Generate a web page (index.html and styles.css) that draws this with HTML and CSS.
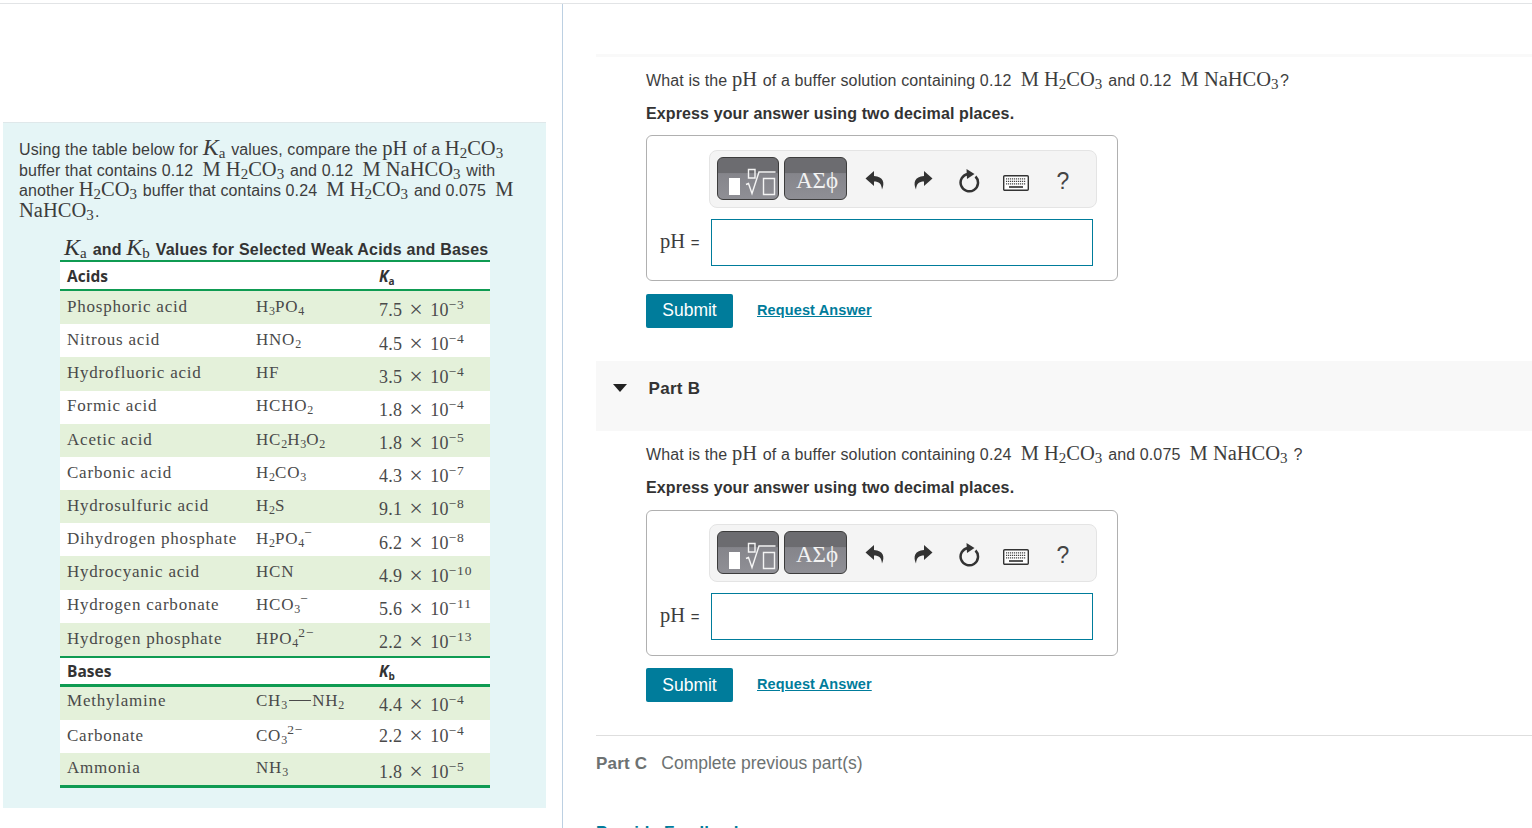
FILE: index.html
```html
<!DOCTYPE html>
<html lang="en">
<head>
<meta charset="utf-8">
<title>Buffer pH</title>
<link rel="stylesheet" href="styles.css">
</head>
<body>
<svg class="defs" width="0" height="0" aria-hidden="true">
  <symbol id="i-undo" viewBox="0 0 24 24"><path d="M11 2 L2.500 9.500 L11 17 V12.500 C16 12.500 18.500 14.500 19 20.500 C22 14 20.500 7.500 11 7 Z"/></symbol>
  <symbol id="i-redo" viewBox="0 0 24 24"><path d="M14 2 L22.500 9.500 L14 17 V12.500 C9 12.500 6.500 14.500 6 20.500 C3 14 4.500 7.500 14 7 Z"/></symbol>
  <symbol id="i-reset" viewBox="0 0 24 24"><path d="M11 5 A8.700 8.700 0 1 0 18.500 7.500" fill="none" stroke="#333" stroke-width="2.500"/><path d="M9.500 0 L17.500 5 L10 10 Z"/></symbol>
  <symbol id="i-keys" viewBox="0 0 26 16"><rect x="0.700" y="0.700" width="24.600" height="14.600" rx="1" fill="#fff" stroke="#333" stroke-width="1.400"/><path d="M3 3.800H23M3 6.300H23M3 8.800H23" stroke="#444" stroke-width="1.300" stroke-dasharray="1.200 .8"/><path d="M6 12H20" stroke="#444" stroke-width="1.800"/></symbol>
  <symbol id="i-template" viewBox="0 0 62 43"><rect x="12" y="21" width="11" height="17" fill="#fff"/><path d="M31.500 12.500h6.500v8.500h-6.500z M46.500 21.500h11v16h-11z M29 27.500l2.500-1 3.500 10 7-21.500h16.500" fill="none" stroke="#f4f4f4" stroke-width="1.400"/></symbol>
</svg>
<div class="page">
  <aside class="left">
    <div class="intro">
      <p class="lead">Using the table below for <span class="m"><i>K</i><sub>a</sub></span> values, compare the <span class="m">pH</span> of a <span class="m">H<sub>2</sub>CO<sub>3</sub></span> buffer that contains 0.12 &nbsp;<span class="m">M H<sub>2</sub>CO<sub>3</sub></span> and 0.12 &nbsp;<span class="m">M NaHCO<sub>3</sub></span> with another <span class="m">H<sub>2</sub>CO<sub>3</sub></span> buffer that contains 0.24 &nbsp;<span class="m">M H<sub>2</sub>CO<sub>3</sub></span> and 0.075 &nbsp;<span class="m">M NaHCO<sub>3</sub></span>.</p>
      <div class="ktable">
        <div class="ktitle"><span class="m"><i>K</i><sub>a</sub></span> and <span class="m"><i>K</i><sub>b</sub></span> Values for Selected Weak Acids and Bases</div>
        <div class="row head h-acids"><span>Acids</span><span></span><span><i>K</i><sub>a</sub></span></div>
        <div class="row alt"><span>Phosphoric acid</span><span>H<sub>3</sub>PO<sub>4</sub></span><span class="val">7.5 <span class="x">×</span> 10<sup>−3</sup></span></div>
        <div class="row"><span>Nitrous acid</span><span>HNO<sub>2</sub></span><span class="val">4.5 <span class="x">×</span> 10<sup>−4</sup></span></div>
        <div class="row alt"><span>Hydrofluoric acid</span><span>HF</span><span class="val">3.5 <span class="x">×</span> 10<sup>−4</sup></span></div>
        <div class="row"><span>Formic acid</span><span>HCHO<sub>2</sub></span><span class="val">1.8 <span class="x">×</span> 10<sup>−4</sup></span></div>
        <div class="row alt"><span>Acetic acid</span><span>HC<sub>2</sub>H<sub>3</sub>O<sub>2</sub></span><span class="val">1.8 <span class="x">×</span> 10<sup>−5</sup></span></div>
        <div class="row"><span>Carbonic acid</span><span>H<sub>2</sub>CO<sub>3</sub></span><span class="val">4.3 <span class="x">×</span> 10<sup>−7</sup></span></div>
        <div class="row alt"><span>Hydrosulfuric acid</span><span>H<sub>2</sub>S</span><span class="val">9.1 <span class="x">×</span> 10<sup>−8</sup></span></div>
        <div class="row"><span>Dihydrogen phosphate</span><span>H<sub>2</sub>PO<sub>4</sub><sup>−</sup></span><span class="val">6.2 <span class="x">×</span> 10<sup>−8</sup></span></div>
        <div class="row alt"><span>Hydrocyanic acid</span><span>HCN</span><span class="val">4.9 <span class="x">×</span> 10<sup>−10</sup></span></div>
        <div class="row"><span>Hydrogen carbonate</span><span>HCO<sub>3</sub><sup>−</sup></span><span class="val">5.6 <span class="x">×</span> 10<sup>−11</sup></span></div>
        <div class="row alt"><span>Hydrogen phosphate</span><span>HPO<sub>4</sub><sup>2−</sup></span><span class="val">2.2 <span class="x">×</span> 10<sup>−13</sup></span></div>
        <div class="row head h-bases"><span>Bases</span><span></span><span><i>K</i><sub>b</sub></span></div>
        <div class="row alt tight"><span>Methylamine</span><span>CH<sub>3</sub><span class="bond"></span>NH<sub>2</sub></span><span class="val">4.4 <span class="x">×</span> 10<sup>−4</sup></span></div>
        <div class="row"><span>Carbonate</span><span>CO<sub>3</sub><sup>2−</sup></span><span class="val up">2.2 <span class="x">×</span> 10<sup>−4</sup></span></div>
        <div class="row alt last"><span>Ammonia</span><span>NH<sub>3</sub></span><span class="val">1.8 <span class="x">×</span> 10<sup>−5</sup></span></div>
      </div>
    </div>
  </aside>
  <main class="right">
    <div class="rule-top"></div>
    <section class="part">
      <p class="q">What is the <span class="m">pH</span> of a buffer solution containing 0.12 &nbsp;<span class="m">M H<sub>2</sub>CO<sub>3</sub></span> and 0.12 &nbsp;<span class="m">M NaHCO<sub>3</sub></span>?</p>
      <p class="hint">Express your answer using two decimal places.</p>
      <div class="answer">
        <div class="toolbar">
          <span class="tbtn t1"><svg width="62" height="43"><use href="#i-template"/></svg></span>
          <span class="tbtn t2">ΑΣϕ</span>
          <span class="tool"><svg width="24" height="24"><use href="#i-undo"/></svg></span>
          <span class="tool"><svg width="24" height="24"><use href="#i-redo"/></svg></span>
          <span class="tool"><svg width="24" height="24"><use href="#i-reset"/></svg></span>
          <span class="tool keys"><svg width="26" height="16"><use href="#i-keys"/></svg></span>
          <span class="tool help">?</span>
        </div>
        <div class="entry"><span class="label"><span class="m">pH</span> =</span><input class="field" type="text" aria-label="pH"></div>
      </div>
      <div class="actions"><button class="submit">Submit</button><a class="req" href="#">Request Answer</a></div>
    </section>
    <header class="band"><span class="tri"></span><span class="band-title">Part B</span></header>
    <section class="part">
      <p class="q">What is the <span class="m">pH</span> of a buffer solution containing 0.24 &nbsp;<span class="m">M H<sub>2</sub>CO<sub>3</sub></span> and 0.075 &nbsp;<span class="m">M NaHCO<sub>3</sub></span> ?</p>
      <p class="hint">Express your answer using two decimal places.</p>
      <div class="answer">
        <div class="toolbar">
          <span class="tbtn t1"><svg width="62" height="43"><use href="#i-template"/></svg></span>
          <span class="tbtn t2">ΑΣϕ</span>
          <span class="tool"><svg width="24" height="24"><use href="#i-undo"/></svg></span>
          <span class="tool"><svg width="24" height="24"><use href="#i-redo"/></svg></span>
          <span class="tool"><svg width="24" height="24"><use href="#i-reset"/></svg></span>
          <span class="tool keys"><svg width="26" height="16"><use href="#i-keys"/></svg></span>
          <span class="tool help">?</span>
        </div>
        <div class="entry"><span class="label"><span class="m">pH</span> =</span><input class="field" type="text" aria-label="pH"></div>
      </div>
      <div class="actions"><button class="submit">Submit</button><a class="req" href="#">Request Answer</a></div>
    </section>
    <div class="partc"><b>Part C</b><span>Complete previous part(s)</span></div>
    <a class="feedback" href="#">Provide Feedback</a>
  </main>
</div>
</body>
</html>
```
FILE: styles.css
```css
html, body { margin: 0; padding: 0; height: 828px; overflow: hidden; background: #fff; }
body { font-family: "Liberation Sans", Arial, sans-serif; font-size: 16px; letter-spacing: 0.12px; color: #3d3d3d; }
.defs { position: absolute; }
.page { display: flex; margin-top: 3px; border-top: 1px solid #e2e4e6; height: 824px; overflow: hidden; }

.m { font-family: "Liberation Serif", serif; font-size: 20.5px; line-height: 0; letter-spacing: 0; font-weight: 400; margin-right: 1.3px; }
.m i { font-size: 24px; line-height: 0; }
.m sub { font-size: 15px; line-height: 0; vertical-align: -3px; }

.left { width: 559px; flex: none; border-right: 1px solid #bcd0e2; padding: 118px 0 0 3px; }
.intro { width: 543px; height: 686px; box-sizing: border-box; background: #e5f5f6; padding: 17px 16px 0; border-top: 1px solid #dfe8ea; }
.lead { margin: 0; line-height: 20.7px; width: 500px; }

.ktable { margin: 15.2px 0 0 41px; width: 430px; }
.ktitle { font-weight: 700; color: #333; height: 22px; line-height: 24px; padding-left: 4px; white-space: nowrap; letter-spacing: 0.2px; }

.row { display: grid; grid-template-columns: 189px 123px 1fr; align-items: center; height: 33.18px; padding-left: 7px; box-sizing: border-box; font-family: "Liberation Serif", serif; font-size: 17px; letter-spacing: 0.78px; color: #4a4a4a; white-space: nowrap; padding-bottom: 1.5px; background: #fff; }
.row sub { font-size: 12px; line-height: 0; vertical-align: -3px; letter-spacing: 0; }
.row sup { font-size: 13.500px; line-height: 0; vertical-align: 7px; letter-spacing: 0.8px; }
.row .val { padding-top: 8px; font-size: 18px; letter-spacing: 0.2px; }
.row .up { padding-top: 1px; }
.x { font-size: 24px; line-height: 0; vertical-align: -1px; margin: 0 2.5px; }
.alt { background: #e4f1da; }
.row.tight { padding-bottom: 5px; }
.row.head { font-family: "Open Sans", sans-serif; font-size: 15.5px; font-weight: 700; color: #333; letter-spacing: 0; background: #fff; padding-bottom: 0; }
.head sub { font-size: 10px; }
.row.h-acids { height: 31px; border-top: 2px solid #0f9b52; border-bottom: 2px solid #0f9b52; }
.row.h-bases { height: 31px; border-top: 2px solid #0f9b52; border-bottom: 3px solid #0f9b52; }
.row.last { border-bottom: 3px solid #0f9b52; height: 35px; }
.bond { display: inline-block; width: 22px; height: 1px; background: #4a4a4a; vertical-align: 5px; margin: 0 1px 0 2px; }

.right { flex: 1; min-width: 0; padding-left: 33px; }
.rule-top { height: 3px; margin-top: 49.6px; background: #f9f9f9; }
.part { padding: 13px 0 0 50px; }
.q { margin: 0; height: 22px; line-height: 22px; white-space: nowrap; }
.hint { margin: 11px 0 0; height: 22px; line-height: 22px; font-weight: 700; color: #333; }

.answer { width: 472px; height: 146px; box-sizing: border-box; margin-top: 10.4px; border: 1px solid #b0b0b0; border-radius: 6px; padding: 13.6px 24px 0 13px; }
.toolbar { display: flex; align-items: flex-start; width: 388px; height: 58px; margin-left: 49px; box-sizing: border-box; background: #f4f4f4; border: 1px solid #e4e4e4; border-radius: 8px; padding: 6px 0 0 7px; }
.tbtn { display: flex; align-items: center; justify-content: center; height: 43px; box-sizing: border-box; border: 1px solid #3c3c3c; border-radius: 6px; background: linear-gradient(#6c6c70 0, #6c6c70 36%, #85858b 38%, #8f8f95 100%); color: #f2f2f2; font-family: "Liberation Serif", serif; font-size: 23px; letter-spacing: 0; padding: 5px 0 0 3px; }
.t1 { width: 62px; padding: 0; }
.t1 svg { margin: -1px; }
.t2 { width: 63px; margin: 0 4px 0 5px; }
.tool { display: flex; align-items: center; justify-content: center; box-sizing: border-box; width: 47px; height: 48px; fill: #333; }
.keys { padding-top: 4px; }
.help { font-size: 23px; color: #444; padding: 1px 0 0 1px; }
.entry { display: flex; align-items: center; margin-top: 11px; height: 47px; }
.label { width: 51px; flex: none; white-space: nowrap; font-size: 15px; }
.field { width: 382px; height: 47px; box-sizing: border-box; border: 1px solid #007c9b; background: #fff; padding: 0; margin: 0; }

.actions { display: flex; align-items: center; margin-top: 12.6px; height: 34px; }
.submit { width: 87px; height: 34px; border: 0; border-radius: 2px; background: #007c9b; color: #fff; font-family: "Liberation Sans", sans-serif; font-size: 17.500px; padding: 0; }
.req { margin: 0 0 2px 24px; font-size: 14.5px; font-weight: 700; color: #007c9b; }

.band { display: flex; align-items: flex-start; height: 70px; margin-top: 33.8px; background: #f8f8f8; box-sizing: border-box; padding: 16px 0 0 17px; }
.tri { width: 0; height: 0; margin-top: 7px; border-style: solid; border-width: 8px 7px 0; border-color: #222 transparent transparent; }
.band-title { margin-left: 21.5px; font-size: 17px; letter-spacing: 0.3px; font-weight: 700; color: #333; line-height: 24px; }
.partc { margin-top: 33px; border-top: 1px solid #dedede; padding-top: 16px; height: 22px; line-height: 22px; color: #6d7272; font-size: 17.500px; letter-spacing: 0; white-space: nowrap; }
.partc b { font-size: 17px; letter-spacing: 0.2px; margin-right: 14px; }
.feedback { display: block; margin-top: 48px; color: #007c9b; font-size: 17px; font-weight: 700; line-height: 22px; }
```
